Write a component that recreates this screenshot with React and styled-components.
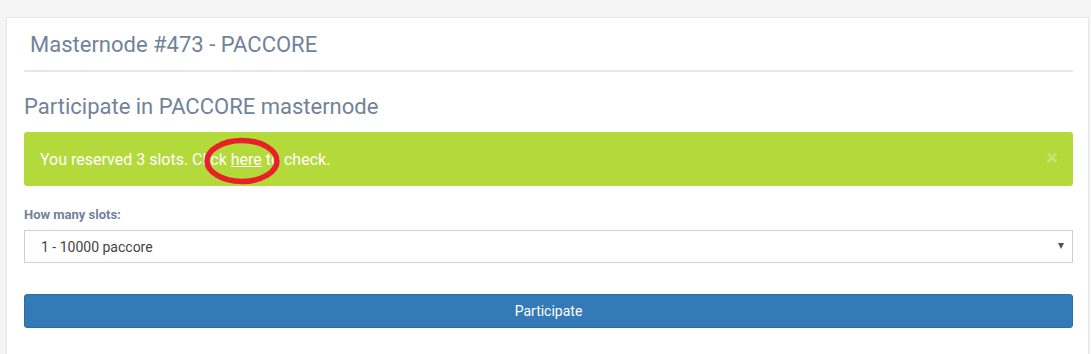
import React, { useState } from "react";
import styled, { createGlobalStyle } from "styled-components";

const GlobalStyle = createGlobalStyle`
  html, body {
    margin: 0;
    padding: 0;
    background: #f5f5f5;
    font-family: Roboto, "Liberation Sans", Arial, sans-serif;
  }
`;

const Page = styled.div`
  padding: 17px 2px 0 6px;
  height: 337px;
  overflow: hidden;
`;

const Card = styled.div`
  background: #fff;
  border: 1px solid #e6e6ec;
  border-bottom: none;
  height: 360px;
  padding: 0 15px 0 17px;
`;

const CardHeader = styled.div`
  border-bottom: 2px solid #e5e8ec;
  padding: 14px 0 0 6px;
  height: 38px;
`;

const Title = styled.h3`
  margin: 0;
  font-size: 22px;
  font-weight: 400;
  color: #72829a;
  line-height: 26px;
`;

const Body = styled.div`
  padding-top: 22px;
`;

const Subtitle = styled.h4`
  margin: 0 0 12px;
  font-size: 22px;
  font-weight: 400;
  color: #72829a;
  line-height: 26px;
`;

const Alert = styled.div`
  position: relative;
  background: #b3d93b;
  border-radius: 3px;
  height: 54px;
  display: flex;
  align-items: center;
  padding: 0 16px;
  color: #fff;
  font-size: 16px;
`;

const AlertLink = styled.a`
  color: #fff;
  text-decoration: underline;
`;

const Close = styled.span`
  position: absolute;
  right: 15px;
  top: 50%;
  transform: translateY(-54%);
  font-size: 22px;
  font-weight: 700;
  line-height: 1;
  color: rgba(255, 255, 255, 0.3);
  cursor: pointer;
`;

const Marker = styled.svg`
  position: absolute;
  left: 173px;
  top: 1px;
  pointer-events: none;
`;

const Label = styled.label`
  display: block;
  margin: 21px 0 7px;
  font-size: 13px;
  line-height: 16px;
  font-weight: 700;
  color: #72829a;
`;

const SelectBox = styled.div`
  position: relative;
  box-sizing: border-box;
  height: 33px;
  border: 1px solid #cfcfcf;
  display: flex;
  align-items: center;
  font-size: 14px;
  color: #444;
`;

const SelectValue = styled.span`
  margin-left: 16px;
`;

const Caret = styled.span`
  position: absolute;
  right: 8px;
  top: 12px;
  width: 0;
  height: 0;
  border-left: 3.5px solid transparent;
  border-right: 3.5px solid transparent;
  border-top: 6px solid #555;
`;

const Button = styled.button`
  display: block;
  width: 100%;
  margin-top: 31px;
  height: 34px;
  background: #337ab7;
  border: 1px solid #2e6da4;
  border-radius: 3px;
  color: #fff;
  font-family: inherit;
  font-size: 14px;
`;

export default function App() {
  const [open, setOpen] = useState(true);
  return (
    <>
      <GlobalStyle />
      <Page>
        <Card>
          <CardHeader>
            <Title>Masternode #473 - PACCORE</Title>
          </CardHeader>
          <Body>
            <Subtitle>Participate in PACCORE masternode</Subtitle>
            {open && (
              <Alert>
                <span>
                  You reserved 3 slots. Click <AlertLink href="#">here</AlertLink> to check.
                </span>
                <Close onClick={() => setOpen(false)}>×</Close>
                <Marker width="90" height="56" viewBox="0 0 90 56">
                  <ellipse cx="45" cy="28" rx="35" ry="20.5" fill="none" stroke="#e8202a" strokeWidth="5.5" />
                </Marker>
              </Alert>
            )}
            <Label>How many slots:</Label>
            <SelectBox>
              <SelectValue>1 - 10000 paccore</SelectValue>
              <Caret />
            </SelectBox>
            <Button>Participate</Button>
          </Body>
        </Card>
      </Page>
    </>
  );
}
